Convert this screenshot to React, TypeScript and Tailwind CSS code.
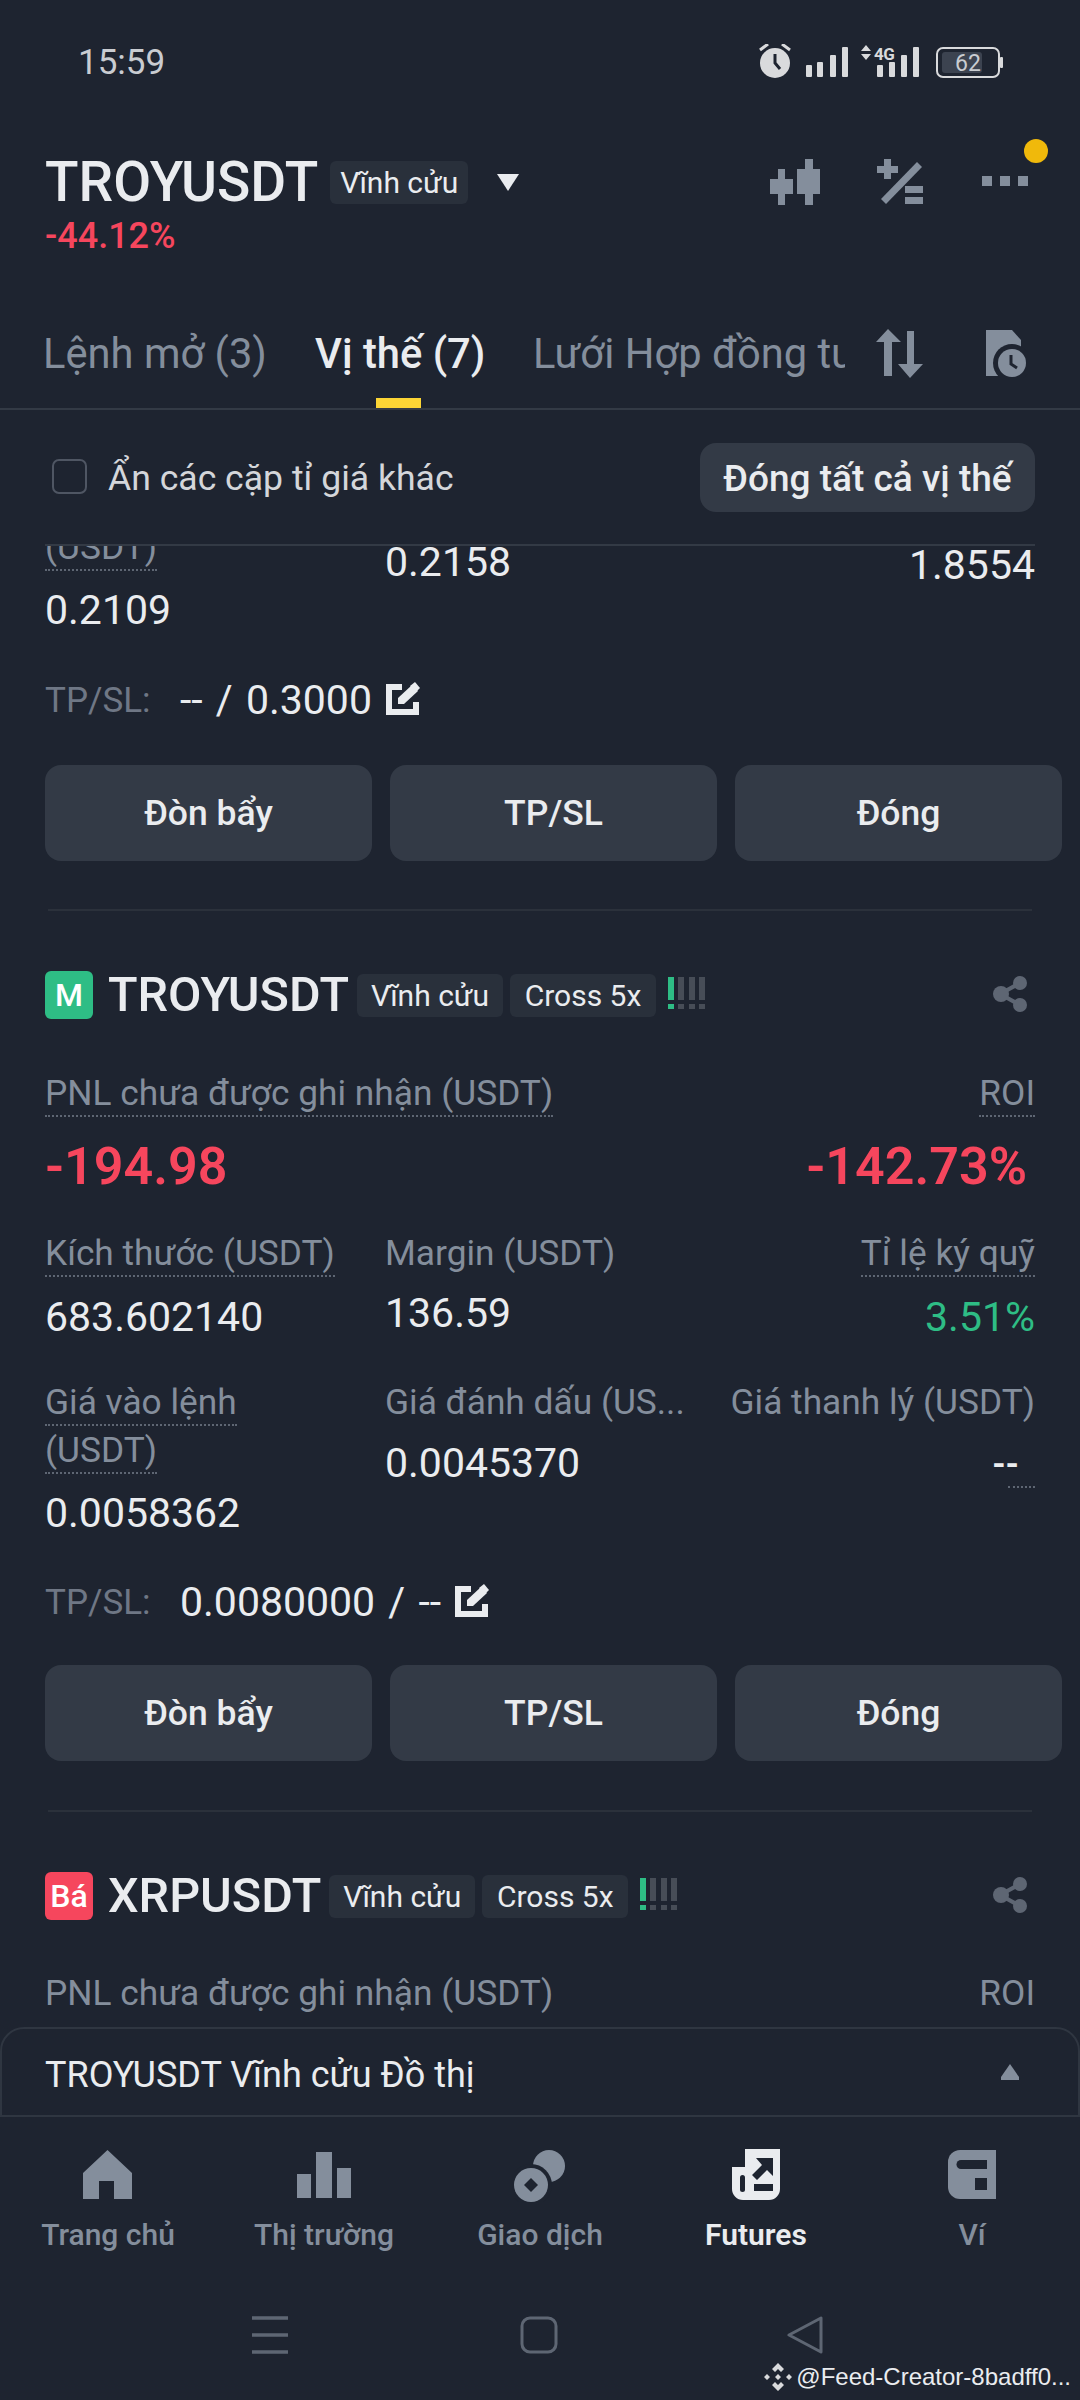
import type { ReactNode } from 'react'

const GRAY = '#848e9c'

function StatusIcons() {
  return (
    <svg width="245" height="36" viewBox="760 44 245 36" fill="#d9dadc">
      {/* alarm */}
      <circle cx="776" cy="63" r="15" />
      <path d="M776 54v9l5 6" fill="none" stroke="#1e2430" strokeWidth="3" />
      <path d="M761 50l8-6M791 50l-8-6" fill="none" stroke="#d9dadc" strokeWidth="3" />
      {/* signal */}
      <rect x="807" y="65" width="6" height="12" rx="1" />
      <rect x="818" y="62" width="6" height="15" rx="1" />
      <rect x="831" y="55" width="6" height="22" rx="1" />
      <rect x="843" y="47" width="6" height="30" rx="1" />
      <path d="M867 45l5 6h-10zM867 60l-5-6h10z" />
      <text x="875" y="60" fontSize="17" fontWeight="700" fontFamily="Roboto" letterSpacing="-0.5">4G</text>
      <rect x="878" y="65" width="6" height="12" rx="1" />
      <rect x="890" y="62" width="6" height="15" rx="1" />
      <rect x="902" y="55" width="6" height="22" rx="1" />
      <rect x="914" y="47" width="6" height="30" rx="1" />
      {/* battery */}
      <rect x="938" y="48" width="62" height="29" rx="6" fill="none" stroke="#d9dadc" strokeWidth="2" />
      <rect x="943" y="52" width="40" height="21" rx="3" fill="#3c4350" />
      <rect x="1001" y="57" width="3" height="11" rx="1" />
      <text x="956" y="71" fontSize="23" fontFamily="Roboto" fill="#c9ccd1">62</text>
    </svg>
  )
}

function CandleIcon() {
  return (
    <svg width="52" height="46" viewBox="769 158 52 46" fill={GRAY}>
      <rect x="770" y="178" width="23" height="15" />
      <rect x="778" y="168" width="7" height="36" />
      <rect x="797" y="168" width="23" height="25" />
      <rect x="805" y="158" width="8" height="46" />
    </svg>
  )
}

function PercentIcon() {
  return (
    <svg width="47" height="46" viewBox="877 158 47 46" fill={GRAY}>
      <path d="M884 158h7v7h7v7h-7v6h-7v-6h-7v-7h7z" />
      <path d="M917 161l5 5-36 37-5-5z" />
      <rect x="905" y="185" width="18" height="7" />
      <rect x="905" y="196" width="18" height="7" />
    </svg>
  )
}

function SortIcon() {
  return (
    <svg width="47" height="50" viewBox="876 327 47 50" fill={GRAY}>
      <path d="M888 327l13 13h-9v34h-8v-34h-8z" />
      <path d="M907 329h7v33h9l-13 14-12-14h9z" />
    </svg>
  )
}

function HistoryIcon() {
  return (
    <svg width="42" height="48" viewBox="986 328 42 48" fill={GRAY}>
      <path d="M986 328h26l9 10v36h-35z" />
      <circle cx="1012" cy="361" r="19" fill="#1e2430" />
      <circle cx="1012" cy="361" r="14" />
      <path d="M1011 353v9l6 4" fill="none" stroke="#1e2430" strokeWidth="3" />
    </svg>
  )
}

function EditIcon() {
  return (
    <svg width="34" height="34" viewBox="389 681 34 34" fill="#eaecef">
      <path d="M389 683h16v6h-10v19h21v-7h6v13h-33z" />
      <path d="M401 703v-6l14-13 6 6-14 13z" />
      <path d="M413 685l5-4 5 6-4 4z" />
    </svg>
  )
}

function ShareIcon() {
  return (
    <svg width="36" height="38" viewBox="992 975 36 38" fill="#5e6673">
      <path d="M1020 983l-20 11 20 11" fill="none" stroke="#5e6673" strokeWidth="4" />
      <circle cx="1020" cy="983" r="7" />
      <circle cx="1001" cy="994" r="8" />
      <circle cx="1020" cy="1005" r="7" />
    </svg>
  )
}

function RiskBars() {
  return (
    <svg width="38" height="33" viewBox="0 0 38 33" className="ml-[12px] -mt-[4px] shrink-0">
      <rect x="0" y="0" width="6" height="23" fill="#2ebd85" />
      <rect x="0" y="27" width="6" height="5" fill="#2ebd85" />
      {[10, 21, 31].map((x) => (
        <g key={x} fill="#474d57">
          <rect x={x} y="0" width="6" height="23" />
          <rect x={x} y="27" width="6" height="5" />
        </g>
      ))}
    </svg>
  )
}

function Label({ children, plain }: { children: ReactNode; plain?: boolean }) {
  return (
    <span
      className={
        plain
          ? 'inline-block pt-[2px] text-[35.3px] leading-[44px] text-[#848e9c] whitespace-nowrap'
          : 'inline-block pt-[2px] text-[35.3px] leading-[44px] text-[#848e9c] whitespace-nowrap border-b-2 border-dotted border-[#5e6673]'
      }
    >
      {children}
    </span>
  )
}

function Value({ children, className = 'text-[#eaecef]' }: { children: ReactNode; className?: string }) {
  return <div className={`text-[41px] leading-[46px] ${className}`}>{children}</div>
}

function Tag({ children }: { children: ReactNode }) {
  return (
    <span className="shrink-0 h-[43px] w-[146px] flex items-center justify-center rounded-[6px] bg-[#29303b] text-[30px] text-[#eaecef] whitespace-nowrap">
      {children}
    </span>
  )
}

function TpSl({ value }: { value: string }) {
  return (
    <div className="flex items-center h-[46px]">
      <span className="w-[135px] text-[35px] text-[#6f7785]">TP/SL:</span>
      <span className="text-[41px] text-[#eaecef] whitespace-nowrap [word-spacing:3px]">{value}</span>
      <span className="ml-[14px] -mt-[5px]">
        <EditIcon />
      </span>
    </div>
  )
}

function ActionButtons() {
  return (
    <div className="flex gap-[18px]">
      {['Đòn bẩy', 'TP/SL', 'Đóng'].map((label) => (
        <button
          key={label}
          className="w-[327px] h-[96px] shrink-0 rounded-[16px] bg-[#333a46] pt-[2px] text-[35.5px] font-medium text-[#eaecef]"
        >
          {label}
        </button>
      ))}
    </div>
  )
}

function Divider() {
  return <div className="h-[2px] mx-[3px] bg-[#2b313b]" />
}

function CardHeader({ side, sideClass, symbol }: { side: string; sideClass: string; symbol: string }) {
  return (
    <div className="flex items-center h-[48px]">
      <span className={`w-[48px] h-[48px] rounded-[6px] flex items-center justify-center text-[32px] font-medium text-white ${sideClass}`}>
        {side}
      </span>
      <span className="ml-[15px] mr-[8px] text-[48.5px] font-medium text-[#eaecef] leading-[48px] whitespace-nowrap">{symbol}</span>
      <span className="flex gap-[7px]">
        <Tag>Vĩnh cửu</Tag>
        <Tag>Cross 5x</Tag>
      </span>
      <RiskBars />
      <span className="ml-auto mr-[7px] -mt-[3px]">
        <ShareIcon />
      </span>
    </div>
  )
}

function TroyCard() {
  return (
    <div className="pt-[60px] pb-[49px]">
      <CardHeader side="M" sideClass="bg-[#2ebd85]" symbol="TROYUSDT" />
      <div className="mt-[50px] flex justify-between">
        <Label>PNL chưa được ghi nhận (USDT)</Label>
        <Label>ROI</Label>
      </div>
      <div className="mt-[20px] flex justify-between pr-[8px] text-[52px] leading-[60px] font-semibold text-[#f6465d]">
        <span>-194.98</span>
        <span>-142.73%</span>
      </div>
      <div className="mt-[32px] grid grid-cols-[330px_327px_313px] gap-x-[10px]">
        <div>
          <Label>Kích thước (USDT)</Label>
          <Value className="mt-[17px] text-[#eaecef]">683.602140</Value>
        </div>
        <div>
          <Label plain>Margin (USDT)</Label>
          <Value className="mt-[15px] text-[#eaecef]">136.59</Value>
        </div>
        <div className="text-right">
          <Label>Tỉ lệ ký quỹ</Label>
          <Value className="mt-[17px] text-[#2ebd85]">3.51%</Value>
        </div>
        <div className="mt-[38px] flex flex-col items-start">
          <Label>Giá vào lệnh</Label>
          <Label>(USDT)</Label>
          <Value className="mt-[16px] text-[#eaecef]">0.0058362</Value>
        </div>
        <div className="mt-[38px]">
          <Label plain>Giá đánh dấu (US...</Label>
          <Value className="mt-[16px] text-[#eaecef]">0.0045370</Value>
        </div>
        <div className="mt-[38px] text-right">
          <Label plain>Giá thanh lý (USDT)</Label>
          <div className="mt-[16px] text-[34px] leading-[46px] font-bold text-[#eaecef] pr-[16px]">--</div>
          <div className="ml-auto w-[27px] border-b-2 border-dotted border-[#5e6673]" />
        </div>
      </div>
      <div className="mt-[44px]">
        <TpSl value="0.0080000 / --" />
      </div>
      <div className="mt-[39px]">
        <ActionButtons />
      </div>
    </div>
  )
}

function NavItem({ icon, label, active }: { icon: ReactNode; label: string; active?: boolean }) {
  return (
    <div className="flex flex-col items-center">
      <div className="h-[54px] flex items-center">{icon}</div>
      <span
        className={
          active
            ? 'mt-[13px] text-[30px] leading-[40px] font-semibold text-[#eaecef]'
            : 'mt-[13px] text-[30px] leading-[40px] font-medium text-[#848e9c]'
        }
      >
        {label}
      </span>
    </div>
  )
}

export default function App() {
  return (
    <div className="relative w-[1080px] h-[2400px] overflow-hidden flex flex-col bg-[#1e2430] font-['Roboto',sans-serif]">
      {/* Status bar */}
      <div className="h-[124px] shrink-0 flex items-center justify-between pl-[78px] pr-[76px]">
        <span className="text-[35px] mt-[2px] text-[#c9ccd1]">15:59</span>
        <StatusIcons />
      </div>

      {/* Header */}
      <div className="mt-[34px] pl-[45px] pr-[52px] h-[48px] flex items-center shrink-0">
        <span className="text-[55px] leading-[48px] font-medium text-[#eaecef]">TROYUSDT</span>
        <span className="ml-[12px] h-[43px] px-[10px] flex items-center rounded-[6px] bg-[#29303b] text-[30px] text-[#eaecef]">
          Vĩnh cửu
        </span>
        <svg width="24" height="18" viewBox="0 0 24 18" className="ml-[28px]">
          <path d="M1 1h22L12 18z" fill="#eaecef" />
        </svg>
        <div className="ml-auto flex items-center">
          <CandleIcon />
          <span className="ml-[56px]">
            <PercentIcon />
          </span>
          <span className="relative ml-[58px] flex gap-[8px] -mt-[2px]">
            <span className="w-[10px] h-[10px] bg-[#848e9c]" />
            <span className="w-[10px] h-[10px] bg-[#848e9c]" />
            <span className="w-[10px] h-[10px] bg-[#848e9c]" />
            <span className="absolute -top-[37px] -right-[20px] w-[24px] h-[24px] rounded-full bg-[#f0b90b]" />
          </span>
        </div>
      </div>
      <div className="mt-[7px] pl-[45px] shrink-0 text-[36px] leading-[46px] font-medium text-[#f6465d]">-44.12%</div>

      {/* Tabs */}
      <div className="mt-[41px] h-[110px] shrink-0 flex items-center pl-[43px] border-b-2 border-[#333a45]">
        <span className="w-[220px] text-[41.7px] text-[#848e9c] whitespace-nowrap">Lệnh mở (3)</span>
        <span className="relative ml-[52px] w-[172px] h-full flex items-center text-[41.7px] font-medium text-[#eaecef] whitespace-nowrap">
          Vị thế (7)
          <span className="absolute bottom-0 left-[61px] w-[45px] h-[10px] bg-[#fcd535]" />
        </span>
        <span className="ml-[46px] w-[312px] overflow-hidden text-[41.7px] text-[#848e9c] whitespace-nowrap">
          Lưới Hợp đồng tương lai
        </span>
        <span className="ml-[31px]">
          <SortIcon />
        </span>
        <span className="ml-[63px]">
          <HistoryIcon />
        </span>
      </div>

      {/* Filter row */}
      <div className="h-[134px] shrink-0 flex items-center justify-between pl-[52px] pr-[45px]">
        <label className="flex items-center gap-[21px] text-[35.6px] text-[#d4d6da]">
          <span className="w-[35px] h-[35px] rounded-[7px] border-2 border-[#4f5663]" />
          <span className="mt-[3px]">Ẩn các cặp tỉ giá khác</span>
        </label>
        <button className="w-[335px] h-[69px] rounded-[16px] bg-[#333a46] pt-[3px] text-[37px] font-medium text-[#eaecef] whitespace-nowrap">
          Đóng tất cả vị thế
        </button>
      </div>

      {/* Positions list */}
      <div className="relative flex-1 min-h-0 overflow-hidden px-[45px]">
        <div className="-mt-[21px] pb-[48px]">
          <div className="grid grid-cols-[330px_327px_313px] gap-x-[10px]">
            <div>
              <Label>(USDT)</Label>
              <Value className="mt-[16px] text-[#eaecef]">0.2109</Value>
            </div>
            <div>
              <Value className="mt-[16px] text-[#eaecef]">0.2158</Value>
            </div>
            <div className="text-right">
              <Value className="mt-[19px] text-[#eaecef]">1.8554</Value>
            </div>
          </div>
          <div className="mt-[45px]">
            <TpSl value="-- / 0.3000" />
          </div>
          <div className="mt-[41px]">
            <ActionButtons />
          </div>
        </div>
        <Divider />
        <TroyCard />
        <Divider />
        <div className="pt-[60px]">
          <CardHeader side="Bá" sideClass="bg-[#f6465d]" symbol="XRPUSDT" />
          <div className="mt-[49px] flex justify-between">
            <Label plain>PNL chưa được ghi nhận (USDT)</Label>
            <Label plain>ROI</Label>
          </div>
        </div>
        {/* sticky header line of the scrolled table */}
        <div className="absolute top-0 left-[45px] right-[45px] h-[2px] bg-[#333a45]" />
      </div>

      {/* Chart drawer */}
      <div className="h-[90px] shrink-0 flex items-center justify-between pl-[43px] pr-[45px] pt-[6px] rounded-t-[24px] border-2 border-[#2f3641]">
        <span className="text-[36px] text-[#eaecef]">TROYUSDT Vĩnh cửu Đồ thị</span>
        <svg width="20" height="16" viewBox="0 0 20 16" className="mr-[13px] -mt-[6px]">
          <path d="M10 0l9 13v3H1v-3z" fill="#848e9c" />
        </svg>
      </div>

      {/* Bottom nav */}
      <div className="h-[170px] shrink-0 grid grid-cols-5 pt-[31px]">
        <NavItem
          label="Trang chủ"
          icon={
            <svg width="50" height="50" viewBox="84 2153 50 50" fill={GRAY}>
              <path d="M108.500 2153L133 2176v26h-18v-18h-15v18H84v-26z" />
            </svg>
          }
        />
        <NavItem
          label="Thị trường"
          icon={
            <svg width="54" height="46" viewBox="297 2153 54 46" fill={GRAY}>
              <rect x="297" y="2175" width="14" height="24" />
              <rect x="316" y="2153" width="16" height="46" />
              <rect x="337" y="2169" width="14" height="30" />
            </svg>
          }
        />
        <NavItem
          label="Giao dịch"
          icon={
            <svg width="52" height="54" viewBox="514 2150 52 54" fill={GRAY}>
              <circle cx="549" cy="2168" r="16" />
              <circle cx="531" cy="2187" r="21" fill="#1e2430" />
              <circle cx="531" cy="2187" r="17" />
              <path d="M531 2180l7 7-7 7-7-7z" fill="#1e2430" />
            </svg>
          }
        />
        <NavItem
          active
          label="Futures"
          icon={
            <svg width="48" height="52" viewBox="732 2151 48 52">
              <path d="M745 2151h35v40a11 11 0 0 1-11 11h-26a11 11 0 0 1-11-11v-22h13z" fill="#eaecef" />
              <path d="M773 2160v18l-6-6-10 10-5-5 10-10-6-7z" fill="#1e2430" />
              <rect x="740" y="2177" width="5" height="17" rx="2.500" fill="#1e2430" />
              <rect x="754" y="2186" width="19" height="7" fill="#1e2430" />
            </svg>
          }
        />
        <NavItem
          label="Ví"
          icon={
            <svg width="48" height="50" viewBox="948 2153 48 50" fill={GRAY}>
              <path d="M960 2153h36v49h-36a12 12 0 0 1-12-12v-25a12 12 0 0 1 12-12z" />
              <path d="M961 2163h26v9h-26a4.500 4.500 0 0 1 0-9z" fill="#1e2430" />
              <rect x="975" y="2181" width="12" height="12" fill="#1e2430" />
            </svg>
          }
        />
      </div>

      {/* System nav */}
      <div className="h-[113px] shrink-0 flex items-start justify-center pt-[29px]">
        <div className="flex items-center -ml-[6px]">
          <svg width="38" height="38" viewBox="0 0 38 38" stroke="#5e6673" strokeWidth="3.500">
            <path d="M1 2h36M1 19h36M1 36h36" />
          </svg>
          <svg width="38" height="38" viewBox="0 0 38 38" className="ml-[231px]" fill="none" stroke="#5e6673" strokeWidth="3">
            <rect x="2" y="2" width="34" height="34" rx="8" />
          </svg>
          <svg width="36" height="38" viewBox="0 0 36 38" className="ml-[229px]" fill="none" stroke="#5e6673" strokeWidth="3" strokeLinejoin="round">
            <path d="M2 19L34 2v34z" />
          </svg>
        </div>
      </div>

      {/* Watermark */}
      <div className="absolute right-[9px] bottom-[6px] flex items-center gap-[4px] font-['Liberation_Sans',sans-serif] text-[24px] leading-[34px] text-[#eaecef]">
        <svg width="28" height="28" viewBox="0 0 28 28" fill="#d9dadc">
          <path d="M14 0l6 6-3 3-3-3-3 3-3-3zM14 28l6-6-3-3-3 3-3-3-3 3zM3 11l3 3-3 3-3-3zM25 11l3 3-3 3-3-3zM14 11l3 3-3 3-3-3z" />
        </svg>
        @Feed-Creator-8badff0...
      </div>
    </div>
  )
}
